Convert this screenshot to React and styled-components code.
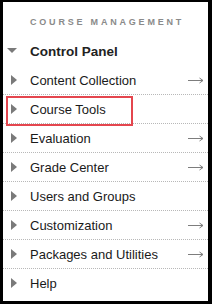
import React from 'react';
import styled, { createGlobalStyle } from 'styled-components';

const GlobalStyle = createGlobalStyle`
  html, body {
    margin: 0;
    padding: 0;
    background: #000;
  }
  body {
    font-family: "Liberation Sans", Arial, sans-serif;
  }
`;

const Panel = styled.div`
  margin: 2px 4px 3px 3px;
  height: 299px;
  background: #fff;
  box-sizing: border-box;
`;

const Heading = styled.div`
  padding: 12px 0 0 27px;
  height: 16px;
  line-height: 16px;
  font-size: 9px;
  font-weight: bold;
  letter-spacing: 2.8px;
  color: #8a8a8a;
  white-space: nowrap;
`;

const PanelTitle = styled.div`
  display: flex;
  align-items: center;
  height: 16px;
  padding: 13px 0 7px 4px;
  font-size: 13.5px;
  font-weight: bold;
  color: #222;
`;

const DownCaret = styled.span`
  width: 0;
  height: 0;
  border-left: 5px solid transparent;
  border-right: 5px solid transparent;
  border-top: 5px solid #7a7a7a;
  margin-right: 13px;
  margin-top: -2px;
`;

const List = styled.ul`
  list-style: none;
  margin: 0;
  padding: 0;
`;

const Item = styled.li`
  position: relative;
  display: flex;
  align-items: center;
  height: 28px;
  padding: 0 4px 0 8px;
  border-bottom: ${(p) => (p.$last ? 'none' : '1px dotted #b8b8b8')};
  font-size: 13px;
  color: #1a1a1a;
`;

const RightCaret = styled.span`
  width: 0;
  height: 0;
  border-top: 5px solid transparent;
  border-bottom: 5px solid transparent;
  border-left: 6px solid #7a7a7a;
  margin-right: 13px;
  margin-top: -1px;
`;

const Label = styled.span`
  flex: 1;
  white-space: nowrap;
`;

const Highlight = styled.span`
  position: absolute;
  left: 3px;
  top: 1px;
  width: 123px;
  height: 26px;
  border: 2px solid #e4464e;
  pointer-events: none;
`;

const Arrow = () => (
  <svg width="16" height="8" viewBox="0 0 16 8">
    <path d="M0 4.5H15M11.5 2L15 4.5L11.5 7" fill="none" stroke="#7d7d7d" strokeWidth="1" />
  </svg>
);

const items = [
  { label: 'Content Collection', arrow: true },
  { label: 'Course Tools', arrow: false, selected: true },
  { label: 'Evaluation', arrow: true },
  { label: 'Grade Center', arrow: true },
  { label: 'Users and Groups', arrow: false },
  { label: 'Customization', arrow: true },
  { label: 'Packages and Utilities', arrow: true },
  { label: 'Help', arrow: false },
];

const App = () => (
  <>
    <GlobalStyle />
    <Panel>
      <Heading>COURSE MANAGEMENT</Heading>
      <PanelTitle>
        <DownCaret />
        Control Panel
      </PanelTitle>
      <List>
        {items.map((item, i) => (
          <Item key={item.label} $last={i === items.length - 1}>
            <RightCaret />
            <Label>{item.label}</Label>
            {item.arrow && <Arrow />}
            {item.selected && <Highlight />}
          </Item>
        ))}
      </List>
    </Panel>
  </>
);

export default App;
